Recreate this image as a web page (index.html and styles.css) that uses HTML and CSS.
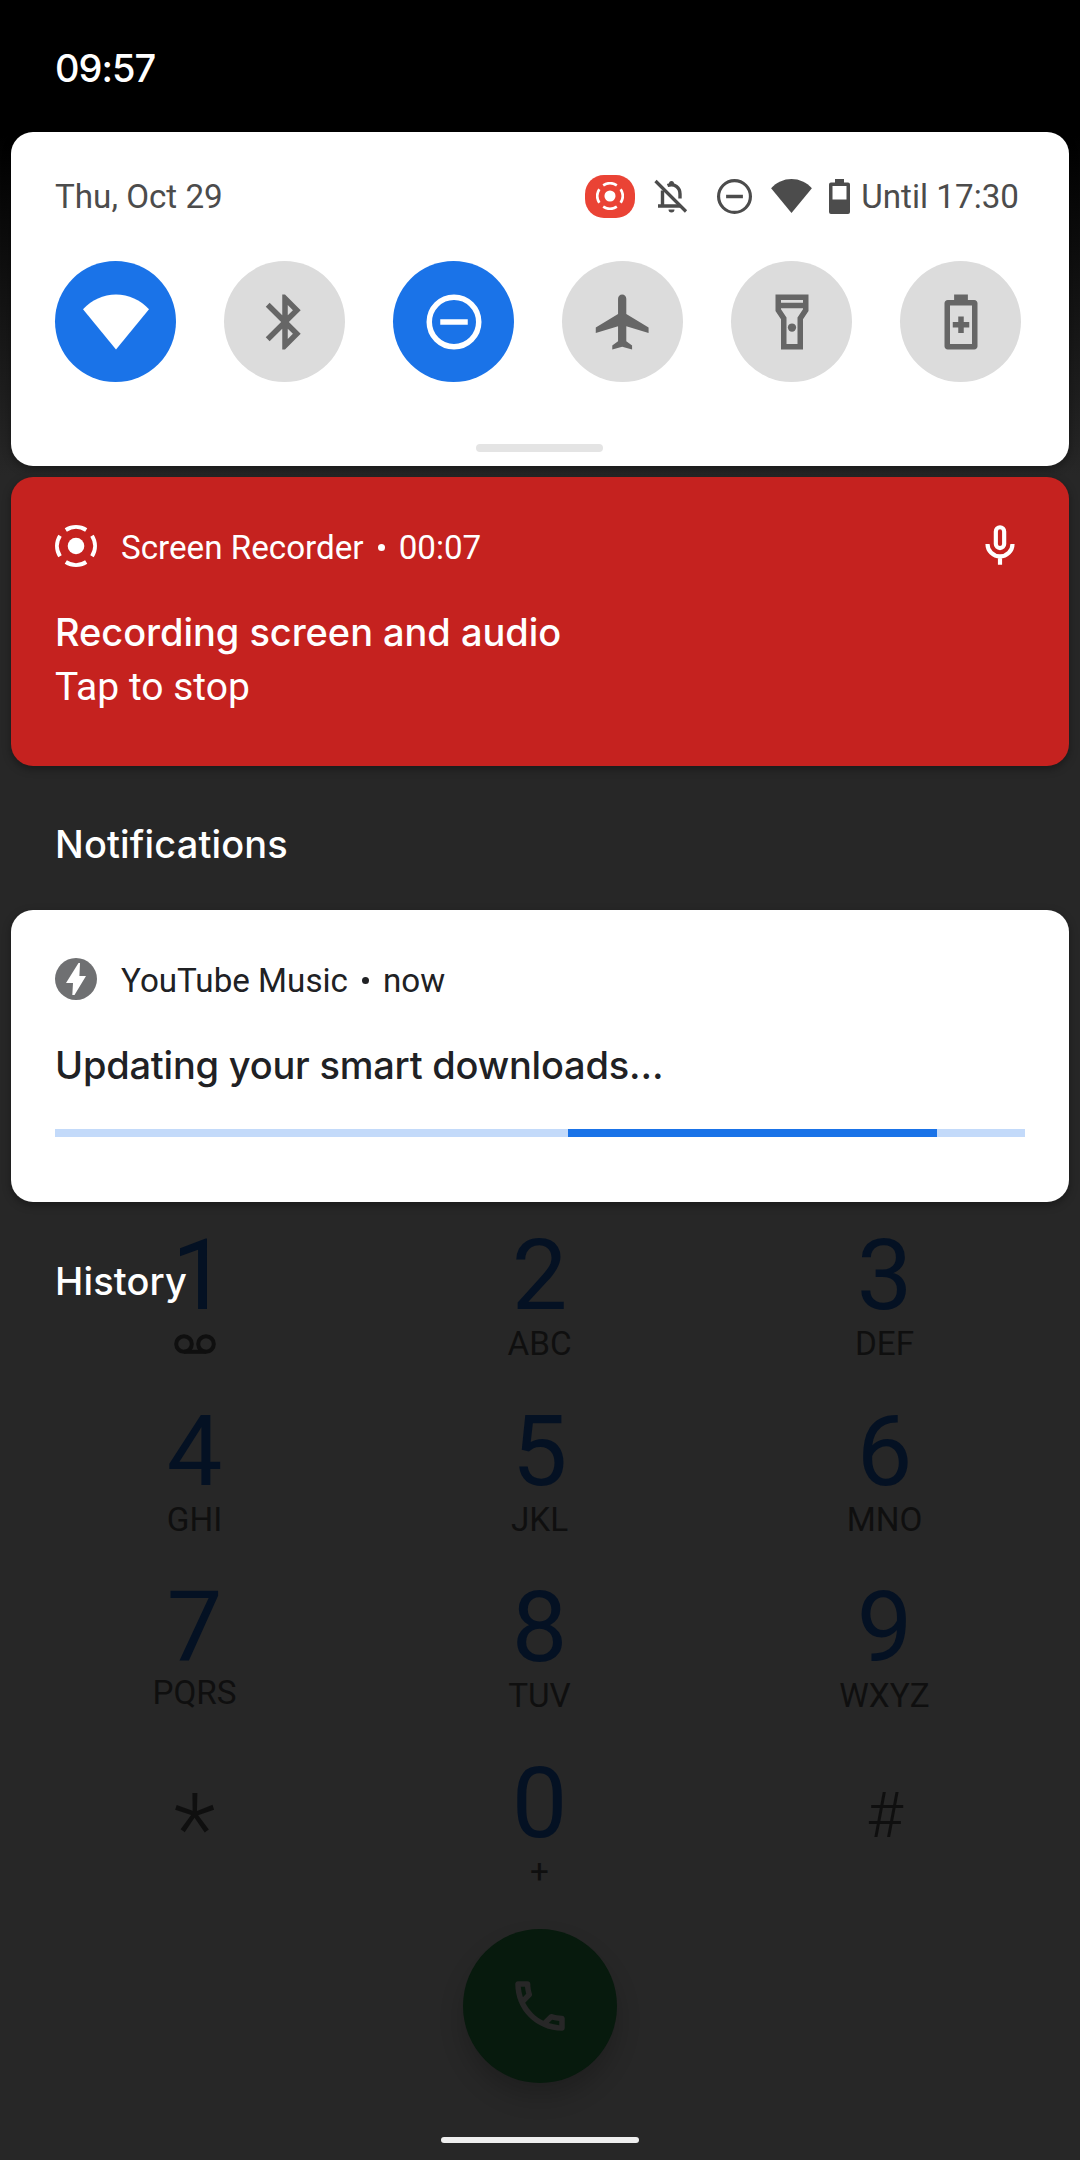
FILE: index.html
```html
<!DOCTYPE html>
<html lang="en">
<head>
    <meta charset="UTF-8">
    <meta name="viewport" content="width=device-width, initial-scale=1.0">
    <title>Notification shade</title>
    <link rel="stylesheet" href="styles.css">
</head>
<body>
    <div class="phone">
        <!-- Dialer behind the shade -->
        <div class="dialer">
            <div class="keypad">
                <div class="key">
                    <span class="digit one">1</span>
                    <svg class="voicemail" viewBox="0 0 42 20" fill="none" stroke="currentColor" stroke-width="4">
                        <circle cx="10" cy="10" r="7.8"/>
                        <circle cx="32" cy="10" r="7.8"/>
                        <path d="M10 17.8h22"/>
                    </svg>
                </div>
                <div class="key"><span class="digit">2</span><span class="letters">ABC</span></div>
                <div class="key"><span class="digit">3</span><span class="letters">DEF</span></div>
                <div class="key"><span class="digit">4</span><span class="letters">GHI</span></div>
                <div class="key"><span class="digit">5</span><span class="letters">JKL</span></div>
                <div class="key"><span class="digit">6</span><span class="letters">MNO</span></div>
                <div class="key tight"><span class="digit">7</span><span class="letters">PQRS</span></div>
                <div class="key"><span class="digit">8</span><span class="letters">TUV</span></div>
                <div class="key"><span class="digit">9</span><span class="letters">WXYZ</span></div>
                <div class="key"><span class="symbol star">*</span></div>
                <div class="key"><span class="digit">0</span><span class="letters">+</span></div>
                <div class="key"><span class="symbol">#</span></div>
            </div>
            <div class="call-button">
                <svg viewBox="0 0 24 24" fill="currentColor"><path d="M6.54 5c.06.89.21 1.76.45 2.59l-1.2 1.2c-.41-1.2-.67-2.47-.76-3.79h1.51m9.86 12.02c.85.24 1.72.39 2.6.45v1.49c-1.32-.09-2.59-.35-3.8-.75l1.2-1.19M7.5 3H4c-.55 0-1 .45-1 1 0 9.39 7.61 17 17 17 .55 0 1-.45 1-1v-3.49c0-.55-.45-1-1-1-1.24 0-2.45-.2-3.57-.57-.1-.04-.21-.05-.31-.05-.26 0-.51.1-.71.29l-2.2 2.2c-2.83-1.45-5.15-3.76-6.59-6.59l2.2-2.2c.28-.28.36-.67.25-1.02C8.7 6.45 8.5 5.25 8.5 4c0-.55-.45-1-1-1z"/></svg>
            </div>
            <div class="nav-handle"></div>
        </div>

        <div class="shade">
            <div class="clock">09:57</div>

            <div class="card quick-settings">
                <div class="status">
                    <span class="date">Thu, Oct 29</span>
                    <div class="record-chip">
                        <svg viewBox="0 0 42 42"><circle cx="21" cy="21" r="8.3" fill="currentColor"/><g fill="none" stroke="currentColor" stroke-width="4"><path d="M10.8 5a19 19 0 0 1 20.4 0M37 10.8a19 19 0 0 1 0 20.4M31.2 37a19 19 0 0 1-20.4 0M5 31.2a19 19 0 0 1 0-20.4"/></g></svg>
                    </div>
                    <svg class="bell" viewBox="0 0 34 34" fill="none" stroke="currentColor">
                        <path d="M1.5 2L32 32.5" stroke-width="3.2"/>
                        <path d="M8.5 11.5V27M4 27h23M13.5 6.5c7-2.5 12.5 2 12.5 8.5v4.5" stroke-width="3.4"/>
                        <path d="M15 4.5a2.5 2.5 0 0 1 5 0v2h-5zM14.5 30.5h6a3 3 0 0 1-6 0z" fill="currentColor" stroke="none"/>
                    </svg>
                    <svg class="dnd" viewBox="0 0 20 20" fill="none" stroke="currentColor"><circle cx="10" cy="10" r="9.1" stroke-width="1.8"/><path d="M5.2 10h9.6" stroke-width="2"/></svg>
                    <svg class="signal" viewBox="0 0 24 20" fill="currentColor"><path d="M12 20L24 5.4C20.9 2 16.6 0 12 0S3.1 2 0 5.4z"/></svg>
                    <svg class="battery" viewBox="0 0 21 35" fill="currentColor"><path fill-rule="evenodd" d="M6 0h9v3.5h4a2 2 0 0 1 2 2V33a2 2 0 0 1-2 2H2a2 2 0 0 1-2-2V5.5a2 2 0 0 1 2-2h4zM3.5 7v13.5h14V7z"/></svg>
                    <span class="until">Until 17:30</span>
                </div>
                <div class="tiles">
                    <div class="tile on">
                        <svg viewBox="0 0 24 24" fill="currentColor"><path d="M12 22L24 7.4C20.9 4 16.6 2 12 2S3.1 4 0 7.4z"/></svg>
                    </div>
                    <div class="tile">
                        <svg viewBox="0 0 24 24" fill="currentColor"><path d="M17.71 7.71L12 2h-1v7.59L6.41 5 5 6.41 10.59 12 5 17.59 6.41 19 11 14.41V22h1l5.71-5.71-4.3-4.29 4.3-4.29zM13 5.83l1.88 1.88L13 9.59V5.83zm1.88 10.46L13 18.17v-3.76l1.88 1.88z"/></svg>
                    </div>
                    <div class="tile on">
                        <svg viewBox="0 0 24 24" fill="none" stroke="currentColor" stroke-width="2"><circle cx="12" cy="12" r="9"/><path d="M7 12h10"/></svg>
                    </div>
                    <div class="tile">
                        <svg viewBox="0 0 24 24" fill="currentColor"><path d="M21.3 16v-2l-8.1-4.9V3.5c0-.83-.67-1.5-1.5-1.5s-1.5.67-1.5 1.5v5.6L2.1 14v2l8.1-2.5V19l-2.1 1.5V22l3.6-1 3.6 1v-1.5L13.2 19v-5.5z"/></svg>
                    </div>
                    <div class="tile">
                        <svg viewBox="0 0 24 24" fill="currentColor"><path fill-rule="evenodd" d="M6 2v6l2 3v11h8V11l2-3V2zM8 4h8v1H8zM8 7h8v.4l-2 3V20h-4v-9.6l-2-3z"/><circle cx="12" cy="14" r="1.5"/></svg>
                    </div>
                    <div class="tile">
                        <svg viewBox="0 0 24 24" fill="currentColor"><path fill-rule="evenodd" d="M9.5 2h5v2h2.3c.7 0 1.2.5 1.2 1.2v15.6c0 .7-.5 1.2-1.2 1.2H7.2c-.7 0-1.2-.5-1.2-1.2V5.2C6 4.5 6.5 4 7.2 4h2.3zM8 6v14h8V6z"/><path d="M11 10h2v2h2v2h-2v2h-2v-2H9v-2h2z"/></svg>
                    </div>
                </div>
                <div class="drag-handle"></div>
            </div>

            <div class="card notification recorder">
                <div class="app">
                    <svg class="app-icon" viewBox="0 0 42 42"><circle cx="21" cy="21" r="8.3" fill="currentColor"/><g fill="none" stroke="currentColor" stroke-width="4"><path d="M10.8 5a19 19 0 0 1 20.4 0M37 10.8a19 19 0 0 1 0 20.4M31.2 37a19 19 0 0 1-20.4 0M5 31.2a19 19 0 0 1 0-20.4"/></g></svg>
                    <span class="label">Screen Recorder</span><span class="dot"></span><span class="label">00:07</span>
                    <svg class="mic" viewBox="0 0 24 24" fill="none" stroke="currentColor" stroke-width="2"><rect x="10" y="3" width="4" height="10" rx="2"/><path d="M6 11a6 6 0 0 0 12 0M12 17v4"/></svg>
                </div>
                <div class="title">Recording screen and audio</div>
                <div class="text">Tap to stop</div>
            </div>

            <h2 class="section">Notifications</h2>

            <div class="card notification music">
                <div class="app">
                    <svg class="app-icon" viewBox="0 0 42 42"><circle cx="21" cy="21" r="21" fill="#6f7072"/><path d="M23.5 5L11 25h7l-.7 12h2.2L31 18h-6.6L25 5z" fill="#fff"/></svg>
                    <span class="label">YouTube Music</span><span class="dot"></span><span class="label">now</span>
                </div>
                <div class="title">Updating your smart downloads…</div>
                <div class="progress"><div class="progress-bar"></div></div>
            </div>

            <h2 class="section history">History</h2>
        </div>
    </div>
</body>
</html>
```
FILE: styles.css
```css
* {
    box-sizing: border-box;
    margin: 0;
    padding: 0;
}

body {
    font-family: Roboto, sans-serif;
    background-color: #272727;
}

svg {
    display: block;
    flex: none;
}

/* The shade and the dialer share one grid cell */
.phone {
    display: grid;
    width: 1080px;
    height: 2160px;
    overflow: hidden;
    background: linear-gradient(#000 0, #000 135px, #272727 475px);
}

.dialer,
.shade {
    grid-area: 1 / 1;
    min-width: 0;
}

/* Dialer */
.dialer {
    display: flex;
    flex-direction: column;
    align-items: center;
    padding-top: 1216px;
    color: #0f0f0f;
}

.keypad {
    display: grid;
    grid-template-columns: repeat(3, 345px);
    grid-auto-rows: 176px;
    width: 1080px;
    height: 704px;
    padding-left: 22px;
}

.key {
    display: flex;
    flex-direction: column;
    align-items: center;
}

.digit {
    margin-top: 14px;
    font-size: 99px;
    line-height: 90px;
    color: #041123;
}

.one {
    padding-left: 10px;
}

.letters {
    margin-top: 4px;
    font-size: 33.3px;
    line-height: 40px;
}

.tight .letters {
    margin-top: 1px;
}

.voicemail {
    width: 42px;
    height: 20px;
    margin-top: 14px;
}

.symbol {
    font-size: 63px;
    font-weight: 300;
    line-height: 76px;
    margin-top: 34px;
}

.star {
    font-size: 98px;
    line-height: 110px;
    margin-top: 31px;
}

.call-button {
    display: flex;
    align-items: center;
    justify-content: center;
    width: 154px;
    height: 154px;
    margin-top: 9px;
    border-radius: 50%;
    background-color: #071a0d;
    color: #272727;
    box-shadow: 0 14px 24px rgba(0, 0, 0, 0.2);
}

.call-button svg {
    width: 66px;
    height: 66px;
}

.nav-handle {
    width: 198px;
    height: 6px;
    margin-top: 54px;
    border-radius: 3px;
    background-color: #eee;
}

/* Shade */
.shade {
    z-index: 1;
    padding: 0 11px;
    color: #fff;
}

.clock {
    height: 132px;
    padding: 44px 0 0 44px;
    font-family: Inter, sans-serif;
    font-size: 38px;
    font-weight: 500;
    line-height: 48px;
    letter-spacing: -1px;
}

.card {
    border-radius: 22px;
    background-color: #fff;
    box-shadow: 0 3px 8px rgba(0, 0, 0, 0.35);
}

.quick-settings {
    display: flex;
    flex-direction: column;
    height: 334px;
    padding: 40px 48px 0 44px;
    color: #4c4c4c;
}

.status {
    display: flex;
    align-items: center;
    height: 48px;
    padding-right: 2px;
    font-size: 33.2px;
}

.date {
    flex: 1;
}

.record-chip {
    display: flex;
    align-items: center;
    justify-content: center;
    width: 50px;
    height: 43px;
    border-radius: 19px;
    background-color: #ea4335;
    color: #fff;
}

.record-chip svg {
    width: 28px;
    height: 28px;
}

.bell {
    width: 34px;
    height: 34px;
    margin-left: 19px;
}

.dnd {
    width: 35px;
    height: 35px;
    margin-left: 29px;
}

.signal {
    width: 41px;
    height: 34px;
    margin-left: 19px;
}

.battery {
    width: 21px;
    height: 35px;
    margin-left: 17px;
}

.until {
    margin-left: 11px;
}

.tiles {
    display: flex;
    gap: 48px;
    margin-top: 41px;
}

.tile {
    display: flex;
    flex: none;
    align-items: center;
    justify-content: center;
    width: 121px;
    height: 121px;
    border-radius: 50%;
    background-color: #dcdcdc;
    color: #666;
}

.tile.on {
    background-color: #1a73e8;
    color: #fff;
}

.tile svg {
    width: 66px;
    height: 66px;
}

.drag-handle {
    width: 127px;
    height: 8px;
    margin: 62px 0 0 421px;
    border-radius: 4px;
    background-color: #e4e4e4;
}

.notification {
    padding: 44px 44px 0;
}

.recorder {
    height: 289px;
    margin-top: 11px;
    background-color: #c5221f;
}

.music {
    height: 292px;
    color: #202124;
}

.app {
    display: flex;
    align-items: center;
    height: 50px;
    font-size: 33.2px;
}

.app-icon {
    width: 42px;
    height: 42px;
    margin-right: 24px;
}

.label {
    padding-top: 2px;
}

.dot {
    width: 7px;
    height: 7px;
    margin: 2px 14px 0;
    border-radius: 50%;
    background-color: currentColor;
}

.mic {
    width: 50px;
    height: 50px;
    margin-left: auto;
}

.title,
.section {
    font-family: Inter, sans-serif;
    font-size: 38px;
    font-weight: 500;
    line-height: 48px;
}

.title {
    margin-top: 37px;
    letter-spacing: -0.05px;
}

.music .title {
    letter-spacing: -0.22px;
}

.text {
    margin-top: 4px;
    font-size: 39px;
    line-height: 54px;
}

.section {
    height: 144px;
    padding: 54px 44px 0;
    letter-spacing: 0.15px;
}

.history {
    padding-top: 55px;
}

.progress {
    height: 8px;
    margin-top: 40px;
    background-color: #c3dafa;
}

.progress-bar {
    width: 369px;
    height: 8px;
    margin-left: 513px;
    background-color: #1a73e8;
}
```
